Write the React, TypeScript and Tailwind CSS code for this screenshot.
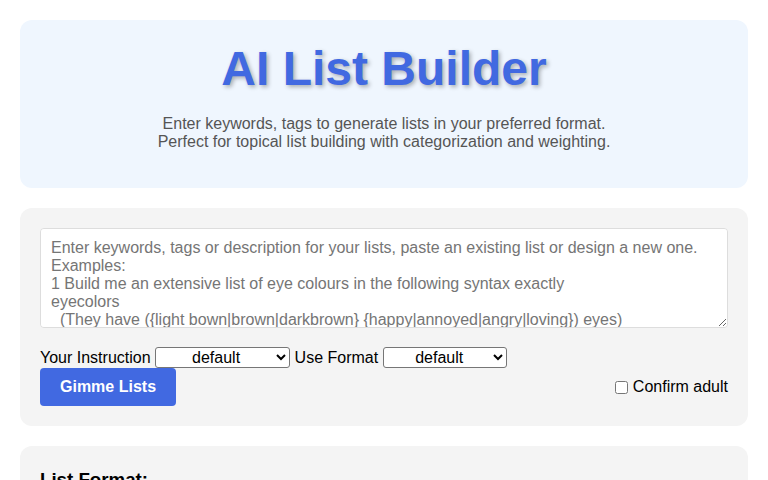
const examples = [
  "Enter keywords, tags or description for your lists, paste an existing list or design a new one.",
  "Examples:",
  "1 Build me an extensive list of eye colours in the following syntax exactly",
  "eyecolors",
  "  (They have ({light bown|brown|darkbrown} {happy|annoyed|angry|loving}) eyes)",
  "2 haircolors",
  "  blonde, red, black, brown, grey",
].join("\n");

export default function App() {
  return (
    <div
      className="min-h-screen bg-white p-5 text-base text-black"
      style={{ fontFamily: '"Liberation Sans", Arial, sans-serif' }}
    >
      <div className="flex flex-col gap-5">
        <header className="rounded-xl bg-[#eff6fe] pt-[21px] pb-[37px] text-center">
          <h1 className="text-[48px] font-bold leading-[55px] text-[#4169e1] [text-shadow:2px_2px_4px_rgba(0,0,0,0.3)]">
            AI List Builder
          </h1>
          <p className="mt-[19px] leading-[18px] text-[#555]">
            Enter keywords, tags to generate lists in your preferred format.
            <br />
            Perfect for topical list building with categorization and weighting.
          </p>
        </header>

        <section className="rounded-xl bg-[#f4f4f4] p-5">
          <textarea
            className="block h-[100px] w-full resize-y rounded border border-[#ddd] bg-white px-[10px] py-[10px] leading-[18px] placeholder:text-[#757575]"
            placeholder={examples}
          />
          <div className="mt-[19px] flex items-center leading-[18px]">
            <span>Your Instruction</span>
            <select className="ml-[4px] h-[21px] w-[135px] rounded-[3px] border border-[#767676] bg-white text-center [text-align-last:center]">
              <option>default</option>
            </select>
            <span className="ml-[5px]">Use Format</span>
            <select className="ml-[5px] h-[21px] w-[124px] rounded-[3px] border border-[#767676] bg-white text-center [text-align-last:center]">
              <option>default</option>
            </select>
          </div>
          <div className="flex items-center justify-between">
            <button className="rounded bg-[#4169e1] px-5 py-[10px] font-bold leading-[18px] text-white">
              Gimme Lists
            </button>
            <label className="flex items-center gap-[5px] leading-[18px]">
              <input type="checkbox" className="h-[13px] w-[13px]" />
              Confirm adult
            </label>
          </div>
        </section>

        <section className="rounded-xl bg-[#f4f4f4] p-5">
          <h3 className="text-[18.72px] font-bold">List Format:</h3>
          <div className="h-40" />
        </section>
      </div>
    </div>
  );
}
